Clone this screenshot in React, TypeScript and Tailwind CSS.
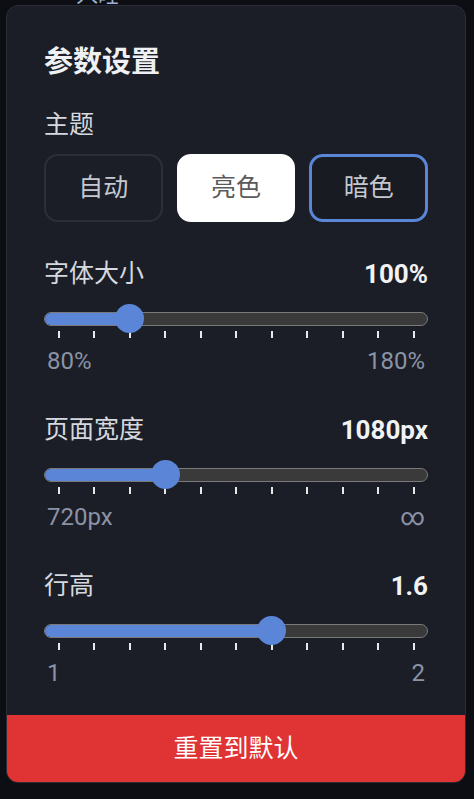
import { useState } from "react";

const themes = ["自动", "亮色", "暗色"] as const;

type SliderProps = {
  label: string;
  value: string;
  percent: number;
  min: string;
  max: string;
  first?: boolean;
};

function TickSlider({ label, value, percent, min, max, first }: SliderProps) {
  // thumb is 29px, track is 384px, so the thumb centre runs 14.5 → 369.5
  const centre = 14.5 + percent * 355;
  return (
    <section className={first ? "mt-[37px]" : "mt-[41px]"}>
      <div className="flex items-center justify-between leading-[30px]">
        <span className="text-[25px] text-[#d5d8de]">{label}</span>
        <span className="text-[26px] font-bold text-[#f1f2f4]">{value}</span>
      </div>
      <div className="relative mt-[15px] flex h-[29px] items-center">
        <div className="relative h-[14px] w-full overflow-hidden rounded-full border border-[#7a7a7a] bg-[#3a3a3a]">
          <div className="h-full bg-[#5b86d8]" style={{ width: `${centre}px` }} />
        </div>
        <div
          className="absolute top-0 h-[29px] w-[29px] rounded-full bg-[#5b86d8]"
          style={{ left: `${centre - 14.5}px` }}
        />
      </div>
      <div className="-mt-[2px] flex justify-between px-[13.5px]">
        {Array.from({ length: 11 }).map((_, i) => (
          <span key={i} className="h-[7px] w-[2px] bg-[#e8e8e8]" />
        ))}
      </div>
      <div className="mt-[10px] flex justify-between px-[3px] text-[24px] leading-[26px] text-[#8a93a6]">
        <span>{min}</span>
        <span>{max}</span>
      </div>
    </section>
  );
}

export default function App() {
  const [theme, setTheme] = useState<string>("亮色");

  return (
    <div className="relative h-[799px] w-[474px] overflow-hidden bg-[#0c0e13] font-[Roboto,'Noto_Sans_CJK_SC',sans-serif]">
      {/* page behind the popover */}
      <div className="-mt-[16px] pl-[76px] text-[22px] leading-[22px] text-[#9fb2d6]">入睡</div>

      <div className="absolute left-[6px] top-[5px] flex h-[778px] w-[460px] flex-col overflow-hidden rounded-[12px] border border-[#2a2d36] bg-[#1b1e27]">
        <div className="px-[37px] pt-[38px]">
          <h1 className="text-[29px] font-bold leading-[36px] text-[#eef0f3]">参数设置</h1>

          <p className="mt-[30px] text-[25px] leading-[30px] text-[#d5d8de]">主题</p>
          <div className="mt-[14px] grid grid-cols-3 gap-[14px]">
            {themes.map((t) => {
              const cls =
                t === "亮色"
                  ? "border-2 border-white bg-white text-[#5a5a5a]"
                  : t === "暗色"
                    ? "border-[3px] border-[#5b86d8] bg-[#181b22] text-[#c4c8d0]"
                    : "border-2 border-[#2b2f39] bg-[#1b1e27] text-[#c4c8d0]";
              return (
                <button
                  key={t}
                  onClick={() => setTheme(t)}
                  data-active={theme === t}
                  className={`flex h-[68px] items-center justify-center rounded-[14px] text-[25px] ${cls}`}
                >
                  {t}
                </button>
              );
            })}
          </div>

          <TickSlider first label="字体大小" value="100%" percent={0.2} min="80%" max="180%" />
          <TickSlider label="页面宽度" value="1080px" percent={0.3} min="720px" max="∞" />
          <TickSlider label="行高" value="1.6" percent={0.6} min="1" max="2" />
        </div>

        <button className="mt-auto flex h-[67px] w-full items-center justify-center bg-[#e03334] text-[25px] text-white">
          重置到默认
        </button>
      </div>
    </div>
  );
}
